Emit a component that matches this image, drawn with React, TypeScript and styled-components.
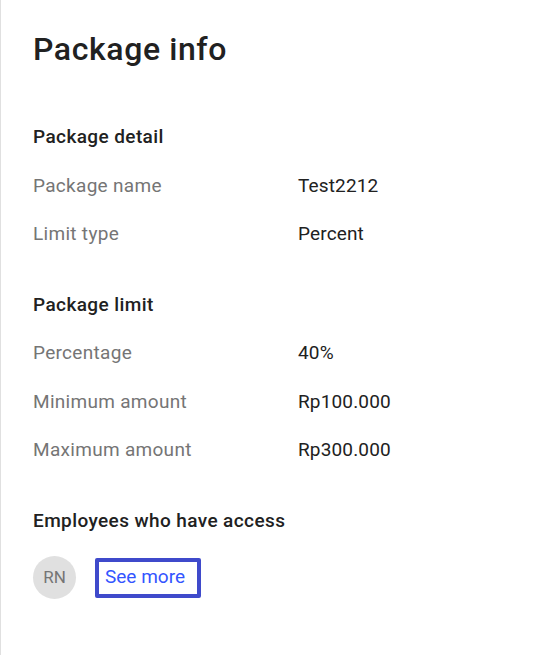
import React from "react";
import styled, { createGlobalStyle } from "styled-components";

const Global = createGlobalStyle`
  html, body { margin: 0; padding: 0; background: #fff; }
  body { font-family: Roboto, "Liberation Sans", sans-serif; }
`;

const Panel = styled.div`
  box-sizing: border-box;
  width: 546px;
  height: 655px;
  border-left: 1px solid #e0e0e0;
  padding: 28px 32px 0;
  color: #212121;
`;

const Title = styled.h1`
  margin: 0 0 55px;
  font-size: 32px;
  line-height: 42px;
  font-weight: 500;
  letter-spacing: 0.6px;
`;

const Section = styled.section`
  margin-bottom: 34.5px;
`;

const Heading = styled.h2`
  margin: 0 0 12px;
  font-size: 19px;
  line-height: 24px;
  font-weight: 500;
  letter-spacing: 0.4px;
`;

const Row = styled.div`
  display: grid;
  grid-template-columns: 265px 1fr;
  height: 48.5px;
  align-items: center;
  font-size: 19px;
`;

const Label = styled.span`
  color: #757575;
  letter-spacing: 0.3px;
`;

const Value = styled.span`
  color: #212121;
  letter-spacing: 0.15px;
`;

const Access = styled.div`
  display: flex;
  align-items: flex-start;
  gap: 19px;
  margin-top: 23px;
`;

const Avatar = styled.div`
  width: 43px;
  height: 43px;
  border-radius: 50%;
  background: #e0e0e0;
  color: #757575;
  display: flex;
  align-items: center;
  justify-content: center;
  font-size: 17px;
`;

const MoreLink = styled.a`
  box-sizing: border-box;
  height: 40px;
  width: 106px;
  margin-top: 2px;
  padding: 0 0 2px 6px;
  display: flex;
  align-items: center;
  border: 4px solid #3f4acb;
  border-radius: 2px;
  color: #3355ff;
  font-size: 19px;
`;

export default function App() {
  return (
    <>
      <Global />
      <Panel>
        <Title>Package info</Title>
        <Section>
          <Heading>Package detail</Heading>
          <Row><Label>Package name</Label><Value>Test2212</Value></Row>
          <Row><Label>Limit type</Label><Value>Percent</Value></Row>
        </Section>
        <Section>
          <Heading>Package limit</Heading>
          <Row><Label>Percentage</Label><Value>40%</Value></Row>
          <Row><Label>Minimum amount</Label><Value>Rp100.000</Value></Row>
          <Row><Label>Maximum amount</Label><Value>Rp300.000</Value></Row>
        </Section>
        <Section>
          <Heading>Employees who have access</Heading>
          <Access>
            <Avatar>RN</Avatar>
            <MoreLink>See more</MoreLink>
          </Access>
        </Section>
      </Panel>
    </>
  );
}
